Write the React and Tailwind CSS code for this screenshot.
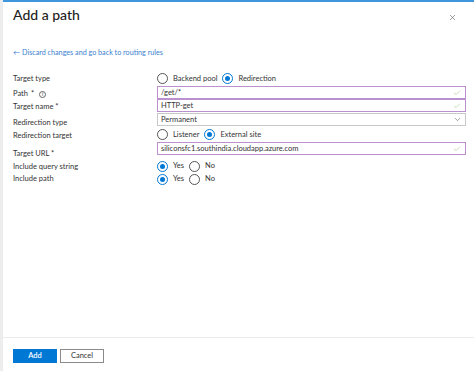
import { X, ChevronDown, Check } from "lucide-react";

const Radio = ({ checked, label }) => (
  <div className="flex items-center gap-[5px] mr-[5px]">
    <span
      className={
        checked
          ? "w-[11px] h-[11px] rounded-full border border-[#0078d4] flex items-center justify-center bg-white"
          : "w-[11px] h-[11px] rounded-full border border-[#555] bg-white"
      }
    >
      {checked && <span className="w-[5px] h-[5px] rounded-full bg-[#0078d4]" />}
    </span>
    <span className="text-[7.5px] text-[#333]">{label}</span>
  </div>
);

const Label = ({ children, className = "" }) => (
  <div className={"w-[144px] shrink-0 text-[7.5px] text-[#333] " + className}>{children}</div>
);

const TextBox = ({ value, purple = true }) => (
  <div
    className={
      "flex-1 h-[13px] flex items-center justify-between px-[3px] bg-white border " +
      (purple ? "border-[#bb90cf]" : "border-[#c8c8c8]")
    }
  >
    <span className="text-[7.5px] text-[#333] leading-none">{value}</span>
    {purple ? (
      <Check size={8} strokeWidth={1.5} className="text-[#8cbf6e] mr-[1px]" />
    ) : (
      <ChevronDown size={9} strokeWidth={1.5} className="text-[#555]" />
    )}
  </div>
);

export default function App() {
  return (
    <div
      className="w-[474px] h-[371px] bg-white flex overflow-hidden"
      style={{ fontFamily: 'Lato, "Noto Sans", sans-serif' }}
    >
      <div className="w-[3px] h-full bg-[#ededed] shrink-0" />
      <div className="flex-1 flex flex-col">
        <div className="h-[2px] bg-[#4096dd]" />
        <div className="flex items-start justify-between pl-[10px] pr-[17px] pt-[3px] h-[26px]">
          <h1 className="text-[14px] text-[#222] leading-[20px] font-medium">Add a path</h1>
          <X size={9} strokeWidth={1.5} className="text-[#555] mt-[8px]" />
        </div>

        <div className="pl-[10px] mt-[20px] text-[7.2px] text-[#3b7fd0] leading-[10px]">
          ← Discard changes and go back to routing rules
        </div>

        <div className="pl-[10px] pr-[8px] mt-[14px] flex flex-col">
          <div className="flex items-center h-[13px]">
            <Label>Target type</Label>
            <Radio label="Backend pool" />
            <Radio checked label="Redirection" />
          </div>

          <div className="flex items-center h-[13px] mt-[1px]">
            <Label className="flex items-center gap-[3px] pt-[3px]">
              Path <span>*</span>
              <span className="w-[7px] h-[7px] rounded-full border border-[#666] text-[5px] leading-none flex items-center justify-center ml-[2px]">
                i
              </span>
            </Label>
            <TextBox value="/get/*" />
          </div>

          <div className="flex items-center h-[13px]">
            <Label className="pt-[3px]">Target name *</Label>
            <TextBox value="HTTP-get" />
          </div>

          <div className="flex items-center h-[13px] mt-[1px]">
            <Label className="pt-[6px]">Redirection type</Label>
            <TextBox value="Permanent" purple={false} />
          </div>

          <div className="flex items-center h-[13px] mt-[2px]">
            <Label className="pt-[3px]">Redirection target</Label>
            <Radio label="Listener" />
            <Radio checked label="External site" />
          </div>

          <div className="flex items-center h-[13px] mt-[1px]">
            <Label className="pt-[10px]">Target URL *</Label>
            <TextBox value="siliconsfc1.southindia.cloudapp.azure.com" />
          </div>

          <div className="flex items-center h-[12px] mt-[5px]">
            <Label className="pt-[2px]">Include query string</Label>
            <Radio checked label="Yes" />
            <Radio label="No" />
          </div>

          <div className="flex items-center h-[12px] mt-[1px]">
            <Label>Include path</Label>
            <Radio checked label="Yes" />
            <Radio label="No" />
          </div>
        </div>

        <div className="flex-1" />
        <div className="border-t border-[#ebebeb] h-[34px] flex items-start pl-[10px] pt-[11px] gap-[3px]">
          <button className="w-[44px] h-[14px] bg-[#0078d4] text-white text-[7.5px] font-semibold leading-none">
            Add
          </button>
          <button className="w-[44px] h-[14px] bg-white border border-[#8a8a8a] text-[#333] text-[7.5px] leading-none">
            Cancel
          </button>
        </div>
      </div>
    </div>
  );
}
